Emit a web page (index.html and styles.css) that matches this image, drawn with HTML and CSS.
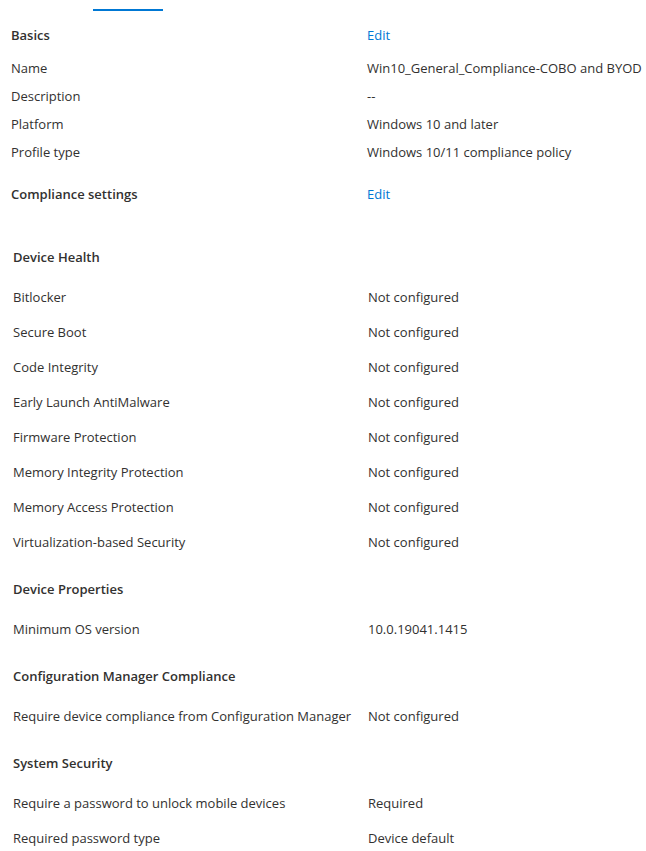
FILE: index.html
```html
<!DOCTYPE html>
<html>
<head>
<meta charset="utf-8">
<link rel="stylesheet" href="styles.css">
</head>
<body>
<div class="tabs"><div class="tab-active"></div></div>
<section class="summary">
  <div class="srow head"><div class="k">Basics</div><div class="v link">Edit</div></div>
  <div class="sgroup">
    <div class="srow"><div class="k">Name</div><div class="v">Win10_General_Compliance-COBO and BYOD</div></div>
    <div class="srow"><div class="k">Description</div><div class="v">--</div></div>
    <div class="srow"><div class="k">Platform</div><div class="v">Windows 10 and later</div></div>
    <div class="srow"><div class="k">Profile type</div><div class="v">Windows 10/11 compliance policy</div></div>
  </div>
  <div class="srow head second"><div class="k">Compliance settings</div><div class="v link">Edit</div></div>
</section>
<section class="settings">
  <div class="group first">
    <div class="ghead">Device Health</div>
    <div class="row"><div class="k">Bitlocker</div><div class="v">Not configured</div></div>
    <div class="row"><div class="k">Secure Boot</div><div class="v">Not configured</div></div>
    <div class="row"><div class="k">Code Integrity</div><div class="v">Not configured</div></div>
    <div class="row"><div class="k">Early Launch AntiMalware</div><div class="v">Not configured</div></div>
    <div class="row"><div class="k">Firmware Protection</div><div class="v">Not configured</div></div>
    <div class="row"><div class="k">Memory Integrity Protection</div><div class="v">Not configured</div></div>
    <div class="row"><div class="k">Memory Access Protection</div><div class="v">Not configured</div></div>
    <div class="row"><div class="k">Virtualization-based Security</div><div class="v">Not configured</div></div>
  </div>
  <div class="group">
    <div class="ghead">Device Properties</div>
    <div class="row"><div class="k">Minimum OS version</div><div class="v">10.0.19041.1415</div></div>
  </div>
  <div class="group">
    <div class="ghead">Configuration Manager Compliance</div>
    <div class="row"><div class="k">Require device compliance from Configuration Manager</div><div class="v">Not configured</div></div>
  </div>
  <div class="group">
    <div class="ghead">System Security</div>
    <div class="row"><div class="k">Require a password to unlock mobile devices</div><div class="v">Required</div></div>
    <div class="row"><div class="k">Required password type</div><div class="v">Device default</div></div>
  </div>
</section>
</body>
</html>
```
FILE: styles.css
```css
html, body {
  margin: 0;
  padding: 0;
  background: #ffffff;
}
body {
  width: 646px;
  overflow: hidden;
  font-family: "Open Sans", "Noto Sans", sans-serif;
  font-size: 13px;
  color: #323130;
}
.tabs {
  height: 11px;
  position: relative;
}
.tab-active {
  position: absolute;
  left: 93px;
  top: 9px;
  width: 70px;
  height: 2px;
  background: #0078d4;
}
.summary {
  padding-left: 11px;
  margin-top: 10px;
}
.srow {
  display: flex;
  height: 28px;
  align-items: center;
  white-space: nowrap;
}
.srow .k {
  width: 356px;
  flex: none;
}
.srow .v {
  flex: none;
}
.head .k {
  font-weight: 600;
}
.sgroup {
  margin-top: 5px;
}
.second {
  margin-top: 14px;
}
.link {
  color: #0078d4;
}
.settings {
  padding-left: 13px;
}
.group {
  margin-top: 12px;
}
.group.first {
  margin-top: 31px;
}
.ghead {
  height: 35px;
  line-height: 37px;
  font-weight: 600;
  margin-bottom: 5px;
  white-space: nowrap;
}
.row {
  display: flex;
  height: 35px;
  align-items: center;
  white-space: nowrap;
}
.row .k {
  width: 355px;
  flex: none;
}
```
